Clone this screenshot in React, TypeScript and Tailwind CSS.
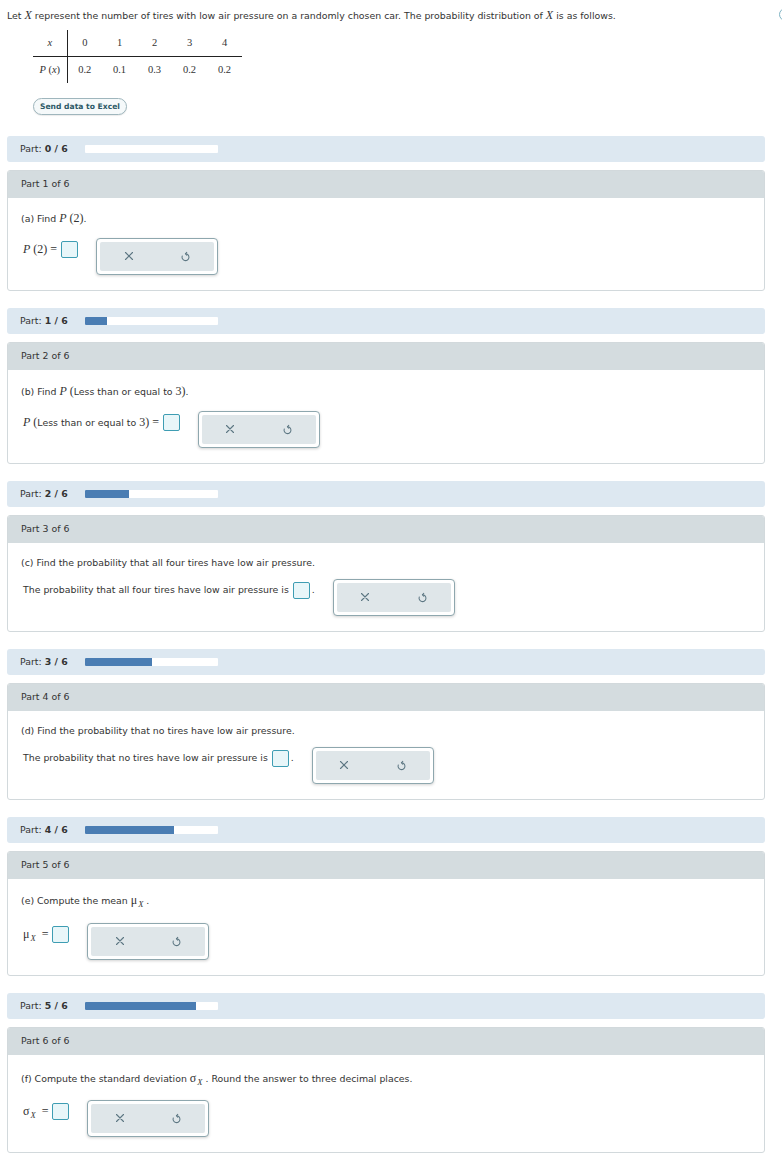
import React from "react";

const sans = { fontFamily: '"DejaVu Sans", Verdana, sans-serif' };

function M({ children, i }: { children: React.ReactNode; i?: boolean }) {
  return (
    <span className={`font-['Liberation_Serif',serif] text-[12px] ${i ? "italic" : ""}`}>{children}</span>
  );
}

function Sub({ children }: { children: React.ReactNode }) {
  return (
    <span className="font-['Liberation_Serif',serif] italic text-[8.5px] relative top-[3px] ml-[1px]">{children}</span>
  );
}

function Box() {
  return <span className="inline-block w-[17px] h-[17px] border-[1.5px] border-[#3e9db3] bg-[#e8f6f9] rounded-[2px] align-middle" />;
}

function UndoIcon() {
  return (
    <svg width="11" height="11" viewBox="0 0 16 16" fill="none" stroke="#5d7783" strokeWidth="1.5" strokeLinecap="round" strokeLinejoin="round">
      <path d="M8 4 A5 5 0 1 1 3.3 7.3" />
      <path d="M9.8 2 L7.8 4 L9.8 6" />
    </svg>
  );
}

function XIcon() {
  return (
    <svg width="10" height="10" viewBox="0 0 10 10" stroke="#5d7783" strokeWidth="1.1" strokeLinecap="round">
      <path d="M1.5 1.5 L8.5 8.5 M8.5 1.5 L1.5 8.5" />
    </svg>
  );
}

function Tools() {
  return (
    <div className="w-[122px] h-[37px] p-[3px] border border-[#8ea7ae] rounded-[4px] bg-white shadow-[0_1px_3px_rgba(0,0,0,0.18)] shrink-0">
      <div className="flex h-full bg-[#dfe6e9] rounded-[2px]">
        <div className="flex-1 flex items-center justify-center"><XIcon /></div>
        <div className="flex-1 flex items-center justify-center"><UndoIcon /></div>
      </div>
    </div>
  );
}

function Progress({ done }: { done: number }) {
  return (
    <div className="h-[26px] bg-[#dde8f1] rounded-[3px] flex items-center pl-[13px] text-[9.4px] text-[#333]">
      <span className="w-[65px]">
        Part: <b>{done} / 6</b>
      </span>
      <div className="w-[133px] h-[8px] bg-white rounded-[1px] overflow-hidden">
        <div className="h-full bg-[#4a7db3]" style={{ width: `${(done / 6) * 100}%` }} />
      </div>
    </div>
  );
}

interface PartProps {
  n: number;
  pt: string;
  mt: string;
  question: React.ReactNode;
  answer: React.ReactNode;
}

function Part({ n, pt, mt, question, answer }: PartProps) {
  return (
    <div className="mt-[8px] border border-[#d2d9dc] rounded-[3px] overflow-hidden">
      <div className="h-[27px] bg-[#d4dcdf] flex items-center pl-[13px] text-[9.4px] text-[#333]">
        Part {n} of 6
      </div>
      <div className={`px-[13px] ${pt} pb-[15px] text-[9.4px] text-[#333]`}>
        <div className="h-[12px] leading-[12px] flex items-center">{question}</div>
        <div className={`flex items-start ${mt} pl-[2px]`}>
          <div className="flex items-center gap-[4px] h-[17px] mt-[3px]">{answer}</div>
          <div className="ml-[18px]">
            <Tools />
          </div>
        </div>
      </div>
    </div>
  );
}

const xs = ["0", "1", "2", "3", "4"];
const ps = ["0.2", "0.1", "0.3", "0.2", "0.2"];

export default function App() {
  return (
    <div className="relative bg-white min-h-[1168px] pl-[7px] pr-[17px] pb-[15px] text-[#333] overflow-hidden" style={sans}>
      <span className="absolute right-[-10px] top-[8px] w-[13px] h-[13px] rounded-full border border-[#7fb3c3]" />
      <p className="pt-[9px] text-[9.4px] leading-[12px]">
        Let <M i>X</M> represent the number of tires with low air pressure on a randomly chosen car. The probability distribution of <M i>X</M> is as follows.
      </p>

      <table className="ml-[26px] mt-[8px] border-collapse font-['Liberation_Serif',serif] text-[10.5px] text-[#333]">
        <tbody>
          <tr className="h-[26px]">
            <td className="w-[34px] text-center italic border-r border-b border-[#222]">x</td>
            {xs.map((x) => (
              <td key={x} className="w-[35px] text-center border-b border-[#222]">{x}</td>
            ))}
          </tr>
          <tr className="h-[27px]">
            <td className="text-center border-r border-[#222]">
              <span className="italic">P</span> (<span className="italic">x</span>)
            </td>
            {ps.map((p, i) => (
              <td key={i} className="text-center">{p}</td>
            ))}
          </tr>
        </tbody>
      </table>

      <button className="ml-[26px] mt-[15px] h-[17px] px-[6px] rounded-full border border-[#9fb6bd] bg-[#f5f9fa] text-[7.6px] font-semibold text-[#2c5967] shadow-[0_1px_1px_rgba(0,0,0,0.08)]">
        Send data to Excel
      </button>

      <div className="mt-[20px]">
        <Progress done={0} />
        <Part
          n={1}
          pt="pt-[15px]"
          mt="mt-[13px]"
          question={<span>(a) Find <M i>P</M> <M>(2)</M>.</span>}
          answer={<><span><M i>P</M> <M>(2) =</M></span><Box /></>}
        />
      </div>

      <div className="mt-[17px]">
        <Progress done={1} />
        <Part
          n={2}
          pt="pt-[16px]"
          mt="mt-[13px]"
          question={<span>(b) Find <M i>P</M> <M>(</M>Less than or equal to <M>3)</M>.</span>}
          answer={<><span><M i>P</M> <M>(</M>Less than or equal to <M>3) =</M></span><Box /></>}
        />
      </div>

      <div className="mt-[17px]">
        <Progress done={2} />
        <Part
          n={3}
          pt="pt-[14px]"
          mt="mt-[10px]"
          question={<span>(c) Find the probability that all four tires have low air pressure.</span>}
          answer={<><span>The probability that all four tires have low air pressure is</span><Box /><span className="-ml-[2px]">.</span></>}
        />
      </div>

      <div className="mt-[17px]">
        <Progress done={3} />
        <Part
          n={4}
          pt="pt-[14px]"
          mt="mt-[10px]"
          question={<span>(d) Find the probability that no tires have low air pressure.</span>}
          answer={<><span>The probability that no tires have low air pressure is</span><Box /><span className="-ml-[2px]">.</span></>}
        />
      </div>

      <div className="mt-[17px]">
        <Progress done={4} />
        <Part
          n={5}
          pt="pt-[16px]"
          mt="mt-[16px]"
          question={<span>(e) Compute the mean <M>μ</M><Sub>X</Sub> .</span>}
          answer={<><span><M>μ</M><Sub>X</Sub> <M>&nbsp;=</M></span><Box /></>}
        />
      </div>

      <div className="mt-[17px]">
        <Progress done={5} />
        <Part
          n={6}
          pt="pt-[18px]"
          mt="mt-[15px]"
          question={<span>(f) Compute the standard deviation <M>σ</M><Sub>X</Sub> . Round the answer to three decimal places.</span>}
          answer={<><span><M>σ</M><Sub>X</Sub> <M>&nbsp;=</M></span><Box /></>}
        />
      </div>
    </div>
  );
}
